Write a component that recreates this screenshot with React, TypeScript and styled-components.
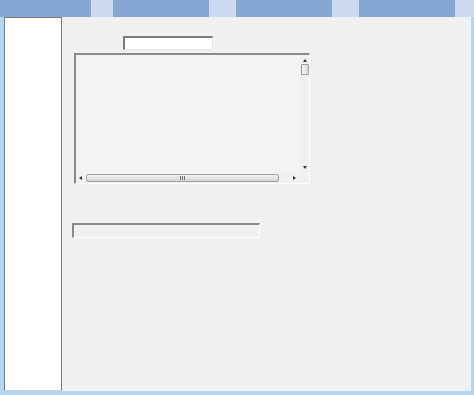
import React from "react";
import styled, { createGlobalStyle } from "styled-components";

const Global = createGlobalStyle`
  html, body { margin: 0; padding: 0; background: #f0f0f0; font-family: "Liberation Sans", Arial, sans-serif; }
  #root { width: 474px; height: 395px; overflow: hidden; }
`;

const Window = styled.div`
  width: 474px;
  height: 395px;
  display: flex;
  flex-direction: column;
  background: #f0f0f0;
`;

const TopBar = styled.div`
  height: 17px;
  display: flex;
  flex-shrink: 0;
`;

const Segment = styled.div<{ $w: number; $light?: boolean }>`
  width: ${(p) => p.$w}px;
  flex-shrink: 0;
  background: ${(p) => (p.$light ? "#cbdaef" : "#86a7d4")};
`;

const Body = styled.div`
  flex: 1;
  display: flex;
  border-left: 4px solid #b3d7f3;
  border-right: 3px solid #b3d7f3;
  border-bottom: 4px solid #b3d7f3;
  min-height: 0;
`;

const Sidebar = styled.div`
  width: 56px;
  flex-shrink: 0;
  background: #ffffff;
  border: 1px solid #7a7a7a;
  border-bottom-color: #cfcfcf;
`;

const Main = styled.div`
  flex: 1;
  display: flex;
  flex-direction: column;
  align-items: flex-start;
  padding-top: 19px;
  background: #f0f0f0;
`;

const TextInput = styled.div`
  margin-left: 61px;
  width: 87px;
  height: 11px;
  background: #ffffff;
  border-top: 2px solid #7d7d7d;
  border-left: 2px solid #7d7d7d;
  border-right: 1px solid #e4e4e4;
  border-bottom: 1px solid #e4e4e4;
`;

const ListBox = styled.div`
  margin-left: 12px;
  margin-top: 3px;
  width: 233px;
  height: 128px;
  display: grid;
  grid-template-columns: 1fr 9px;
  grid-template-rows: 1fr 10px;
  background: #f3f3f3;
  border-top: 2px solid #8a8a8a;
  border-left: 2px solid #8a8a8a;
  border-right: 1px solid #ffffff;
  border-bottom: 1px solid #ffffff;
`;

const ListArea = styled.div`
  background: #f3f3f3;
`;

const VScroll = styled.div`
  display: flex;
  flex-direction: column;
  align-items: center;
  background: #f0f0f0;
  padding-top: 4px;
  padding-bottom: 4px;
`;

const HScroll = styled.div`
  display: flex;
  align-items: center;
  background: #f0f0f0;
  padding-left: 3px;
  padding-right: 4px;
`;

const Corner = styled.div`
  background: #f0f0f0;
`;

const ArrowUp = styled.div`
  width: 0;
  height: 0;
  border-left: 2px solid transparent;
  border-right: 2px solid transparent;
  border-bottom: 3px solid #333;
`;

const ArrowDown = styled.div`
  width: 0;
  height: 0;
  border-left: 2px solid transparent;
  border-right: 2px solid transparent;
  border-top: 3px solid #333;
`;

const ArrowLeft = styled.div`
  width: 0;
  height: 0;
  border-top: 2px solid transparent;
  border-bottom: 2px solid transparent;
  border-right: 3px solid #333;
`;

const ArrowRight = styled.div`
  width: 0;
  height: 0;
  border-top: 2px solid transparent;
  border-bottom: 2px solid transparent;
  border-left: 3px solid #333;
`;

const VThumb = styled.div`
  margin-top: 2px;
  width: 6px;
  height: 9px;
  background: linear-gradient(to right, #f4f4f4, #dcdcdc);
  border: 1px solid #9a9a9a;
  border-radius: 1px;
`;

const Spacer = styled.div`
  flex: 1;
`;

const HThumb = styled.div`
  margin-left: 4px;
  width: 191px;
  height: 6px;
  background: linear-gradient(to bottom, #f2f2f2, #d4d4d4);
  border: 1px solid #a3a3a3;
  border-radius: 2px;
  display: flex;
  align-items: center;
  justify-content: center;
`;

const Grip = styled.div`
  width: 5px;
  height: 4px;
  background: repeating-linear-gradient(to right, #6f6f6f 0 1px, transparent 1px 2px);
`;

const Field = styled.div`
  margin-left: 10px;
  margin-top: 39px;
  width: 185px;
  height: 12px;
  background: #f0f0f0;
  border-top: 2px solid #8a8a8a;
  border-left: 2px solid #8a8a8a;
  border-right: 1px solid #ffffff;
  border-bottom: 1px solid #ffffff;
`;

const segments: { w: number; light?: boolean }[] = [
  { w: 91 },
  { w: 22, light: true },
  { w: 96 },
  { w: 27, light: true },
  { w: 96 },
  { w: 27, light: true },
  { w: 96 },
  { w: 19, light: true },
];

export default function App() {
  return (
    <>
      <Global />
      <Window>
        <TopBar>
          {segments.map((s, i) => (
            <Segment key={i} $w={s.w} $light={s.light} />
          ))}
        </TopBar>
        <Body>
          <Sidebar />
          <Main>
            <TextInput />
            <ListBox>
              <ListArea />
              <VScroll>
                <ArrowUp />
                <VThumb />
                <Spacer />
                <ArrowDown />
              </VScroll>
              <HScroll>
                <ArrowLeft />
                <HThumb>
                  <Grip />
                </HThumb>
                <Spacer />
                <ArrowRight />
              </HScroll>
              <Corner />
            </ListBox>
            <Field />
          </Main>
        </Body>
      </Window>
    </>
  );
}
